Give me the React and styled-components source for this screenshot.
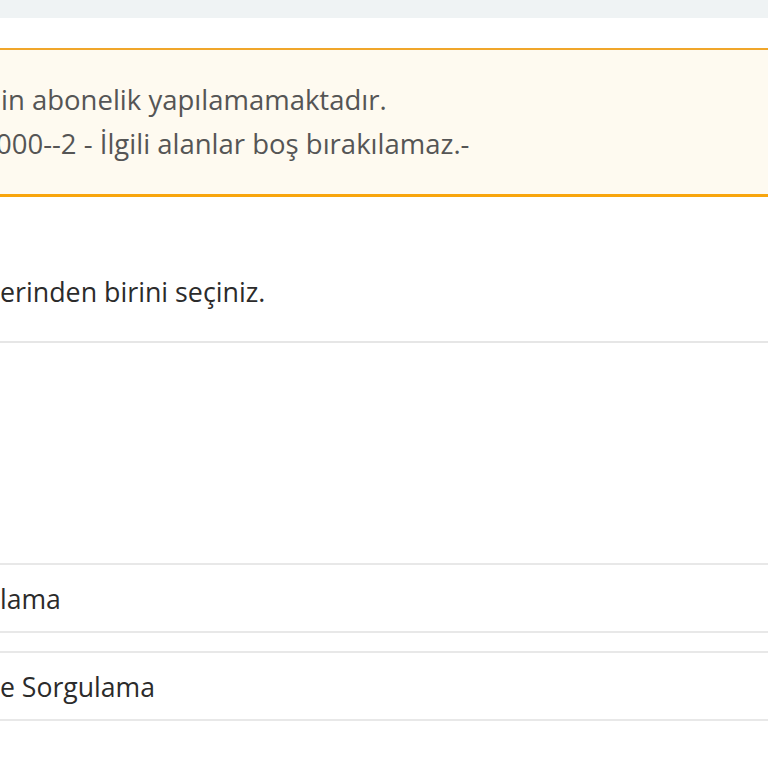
import React from "react";
import styled, { createGlobalStyle } from "styled-components";

const Global = createGlobalStyle`
  html, body { margin: 0; padding: 0; background: #ffffff; }
  body { font-family: "Open Sans", "Noto Sans", sans-serif; overflow: hidden; }
`;

const Page = styled.div`
  width: 768px;
  height: 768px;
  display: flex;
  flex-direction: column;
  background: #fff;
`;

const TopBar = styled.div`
  height: 18px;
  background: #eff3f4;
`;

const Alert = styled.div`
  margin-top: 30px;
  border-top: 2px solid #f0a62a;
  border-bottom: 3px solid #f8a50d;
  background: #fefaf0;
  padding: 28px 0 28px;
  display: flex;
  flex-direction: column;
  color: #555;
  font-size: 27.5px;
  line-height: 44px;
`;

const Line = styled.div`
  white-space: nowrap;
  margin-left: ${(p) => p.$shift || 0}px;
`;

const Lead = styled.div`
  margin-top: 80px;
  height: 64px;
  font-size: 26.8px;
  line-height: 30px;
  color: #2b2b2b;
  white-space: nowrap;
  border-bottom: 2px solid #e6e6e6;
`;

const List = styled.div`
  margin-top: 220px;
  display: flex;
  flex-direction: column;
  gap: 18px;
`;

const Item = styled.div`
  height: 64px;
  padding-top: 2px;
  box-sizing: content-box;
  border-top: 2px solid #e8e8e8;
  border-bottom: 2px solid #e8e8e8;
  display: flex;
  align-items: center;
  font-size: 26.6px;
  color: #2b2b2b;
  white-space: nowrap;
`;

export default function App() {
  return (
    <Page>
      <Global />
      <TopBar />
      <Alert>
        <Line $shift={1}>in abonelik yapılamamaktadır.</Line>
        <Line $shift={-4}>000--2 - İlgili alanlar boş bırakılamaz.-</Line>
      </Alert>
      <Lead>erinden birini seçiniz.</Lead>
      <List>
        <Item>lama</Item>
        <Item>e Sorgulama</Item>
      </List>
    </Page>
  );
}
